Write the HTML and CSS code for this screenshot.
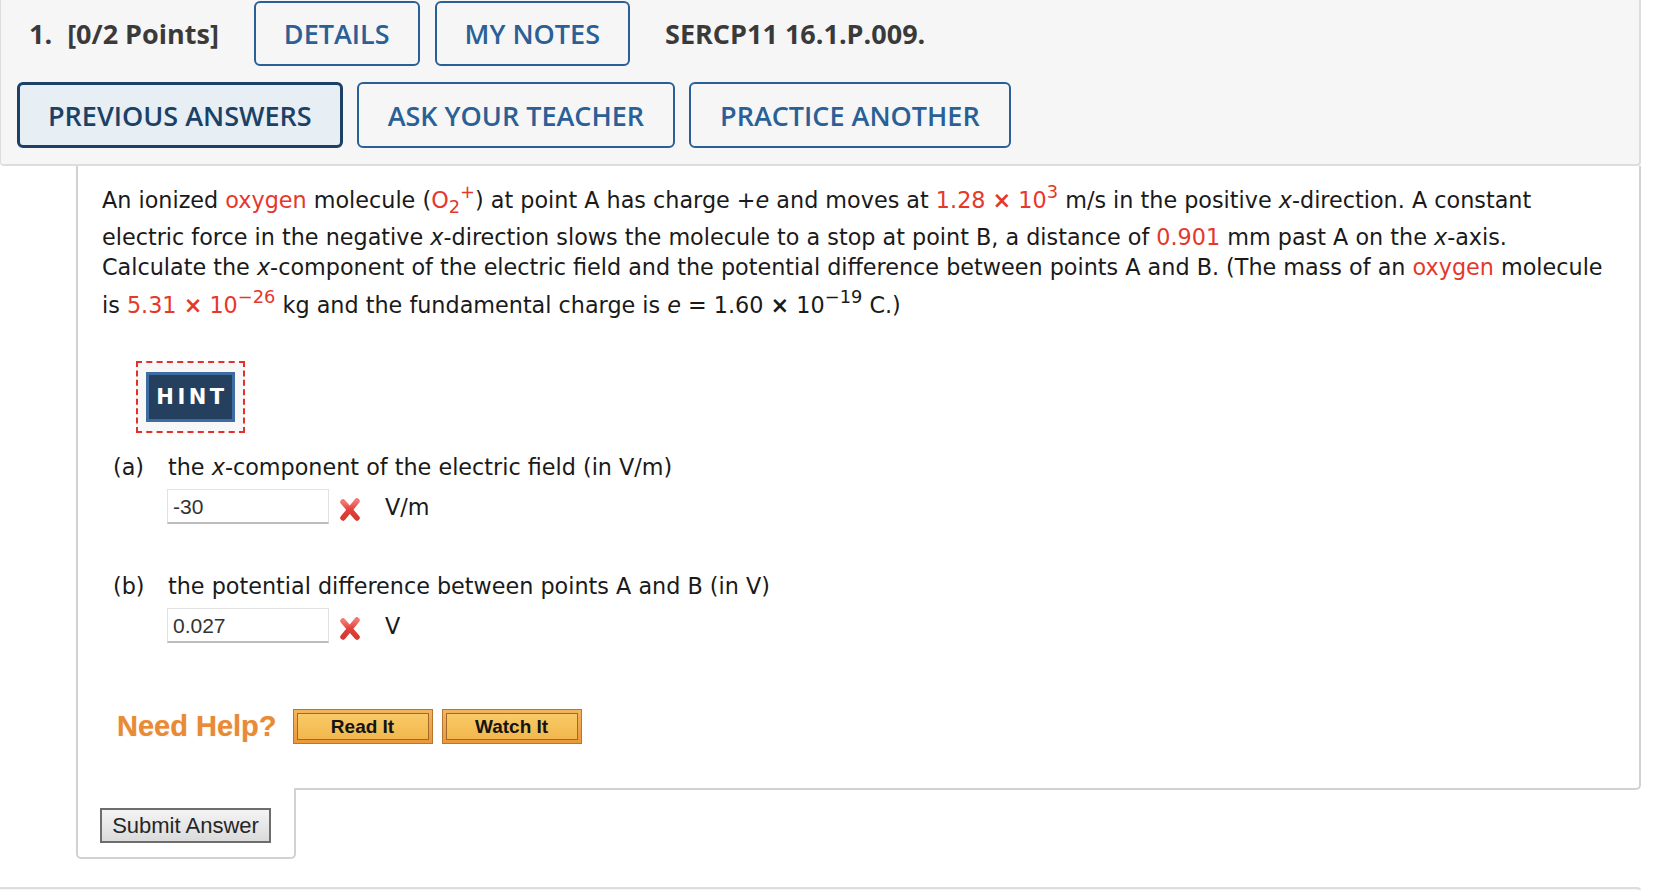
FILE: index.html
```html
<!DOCTYPE html>
<html lang="en">
<head>
<meta charset="utf-8">
<title>SERCP11 16.1.P.009.</title>
<link rel="stylesheet" href="styles.css">
</head>
<body>
<div class="page">
  <div class="qhead">
    <div class="row row1">
      <span class="qnum">1.</span>
      <span class="pts">[0/2 Points]</span>
      <button class="tbtn">DETAILS</button>
      <button class="tbtn">MY NOTES</button>
      <span class="qid">SERCP11 16.1.P.009.</span>
    </div>
    <div class="row row2">
      <button class="tbtn active">PREVIOUS ANSWERS</button>
      <button class="tbtn">ASK YOUR TEACHER</button>
      <button class="tbtn">PRACTICE ANOTHER</button>
    </div>
  </div>

  <div class="qbody">
    <p class="prompt">An ionized <span class="red">oxygen</span> molecule (<span class="red">O<sub>2</sub><sup>+</sup></span>) at point A has charge +<i>e</i> and moves at <span class="red">1.28 <b>×</b> 10<sup>3</sup></span> m/s in the positive <i>x</i>-direction. A constant<br>electric force in the negative <i>x</i>-direction slows the molecule to a stop at point B, a distance of <span class="red">0.901</span> mm past A on the <i>x</i>-axis.<br>Calculate the <i>x</i>-component of the electric field and the potential difference between points A and B. (The mass of an <span class="red">oxygen</span> molecule<br>is <span class="red">5.31 <b>×</b> 10<sup>−26</sup></span> kg and the fundamental charge is <i>e</i> = 1.60 <b>×</b> 10<sup>−19</sup> C.)</p>

    <div class="hint-wrap"><span class="hint">HINT</span></div>

    <div class="part part-a">
      <div class="part-label"><span class="letter">(a)</span><span>the <i>x</i>-component of the electric field (in V/m)</span></div>
      <div class="answer">
        <span class="field">-30</span>
        <svg class="wrong" viewBox="0 0 24 26" width="24" height="26" aria-hidden="true">
          <defs>
            <linearGradient id="xg" x1="0" y1="0" x2="0" y2="1">
              <stop offset="0" stop-color="#f07a72"/>
              <stop offset="0.5" stop-color="#e2413a"/>
              <stop offset="1" stop-color="#d63a33"/>
            </linearGradient>
          </defs>
          <path d="M5 5 L19 21" stroke="url(#xg)" stroke-width="5.5" stroke-linecap="round" fill="none"/>
          <path d="M19 4 L5 21" stroke="url(#xg)" stroke-width="5.5" stroke-linecap="round" fill="none"/>
        </svg>
        <span class="unit">V/m</span>
      </div>
    </div>

    <div class="part part-b">
      <div class="part-label"><span class="letter">(b)</span><span>the potential difference between points A and B (in V)</span></div>
      <div class="answer">
        <span class="field">0.027</span>
        <svg class="wrong" viewBox="0 0 24 26" width="24" height="26" aria-hidden="true">
          <path d="M5 5 L19 21" stroke="url(#xg)" stroke-width="5.5" stroke-linecap="round" fill="none"/>
          <path d="M19 4 L5 21" stroke="url(#xg)" stroke-width="5.5" stroke-linecap="round" fill="none"/>
        </svg>
        <span class="unit">V</span>
      </div>
    </div>

    <div class="help">
      <span class="need">Need Help?</span>
      <span class="obtn"><span class="obtn-in">Read It</span></span>
      <span class="obtn"><span class="obtn-in">Watch It</span></span>
    </div>
  </div>

  <div class="submit-tab">
    <button class="submit">Submit Answer</button>
  </div>

  <div class="next-q"></div>
</div>
</body>
</html>
```

FILE: styles.css
```css
html, body {
  margin: 0;
  padding: 0;
  background: #ffffff;
}

.page {
  width: 1641px;
}

/* ---------- question header ---------- */
.qhead {
  background: #f6f6f6;
  border: 2px solid #dddddd;
  border-top: none;
  border-left-width: 1px;
  border-radius: 0 0 4px 4px;
  padding: 1px 0 16px 16px;
  font-family: "Open Sans", "Liberation Sans", sans-serif;
}

.row {
  display: flex;
  align-items: center;
}

.row1 {
  height: 65px;
  padding-left: 12px;
}

.row2 {
  height: 66px;
  margin-top: 16px;
  gap: 14px;
}

.qnum,
.pts,
.qid {
  font-size: 27px;
  font-weight: 700;
  color: #3a3a3a;
}

.pts {
  margin-left: 15px;
  margin-right: 35px;
}

.qid {
  margin-left: 35px;
}

.tbtn {
  height: 100%;
  box-sizing: border-box;
  padding: 0 28px;
  border: 2px solid #2a6096;
  border-radius: 6px;
  background: transparent;
  color: #2a6096;
  font-family: "Open Sans", "Liberation Sans", sans-serif;
  font-size: 27px;
  font-weight: 600;
  line-height: 1;
}

.row2 .tbtn {
  padding: 0 29px;
}

.row1 .tbtn + .tbtn {
  margin-left: 15px;
}

.row2 .tbtn.active {
  border: 3px solid #1b4166;
  color: #1b4166;
  background: #e7eef4;
  padding: 0 28px;
}

/* ---------- question body ---------- */
.qbody {
  margin-left: 76px;
  border: 2px solid #d2d2d2;
  border-top: none;
  border-radius: 0 0 5px 0;
  padding: 11px 24px 44px 24px;
  font-family: "DejaVu Sans", Verdana, sans-serif;
  font-size: 22.3px;
  color: #1a1a1a;
}

.prompt {
  margin: 0;
  line-height: 30px;
  white-space: nowrap;
}

.red {
  color: #e5382c;
}

.prompt sub,
.prompt sup {
  font-size: 0.8em;
}

.prompt sup {
  vertical-align: 0.55em;
}

.prompt b {
  font-weight: bold;
}

/* hint */
.hint-wrap {
  display: inline-block;
  margin: 41px 0 0 34px;
  padding: 9px 8px;
  border: 2px dashed #e3302a;
  background: #f7f7f7;
}

.hint {
  display: block;
  width: 89px;
  height: 50px;
  box-sizing: border-box;
  border: 3px solid #3e6ba1;
  background: #253f5f;
  color: #ffffff;
  font-family: "DejaVu Sans", Verdana, sans-serif;
  font-weight: bold;
  font-size: 21px;
  letter-spacing: 3.5px;
  line-height: 44px;
  text-align: center;
  padding-left: 3px;
}

/* parts */
.part-label {
  display: flex;
  line-height: 30px;
  padding-left: 11px;
}

.letter {
  width: 55px;
  flex: none;
}

.part-a {
  margin-top: 19px;
}

.part-b {
  margin-top: 47px;
}

.answer {
  display: flex;
  align-items: center;
  margin-top: 7px;
  padding-left: 65px;
  height: 35px;
}

.field {
  width: 162px;
  height: 35px;
  box-sizing: border-box;
  border: 1px solid #e2e2e2;
  border-bottom: 2px solid #bdbdbd;
  background: #ffffff;
  font-family: "Liberation Sans", Arial, sans-serif;
  font-size: 21px;
  color: #333333;
  line-height: 33px;
  padding-left: 5px;
}

.wrong {
  margin-left: 9px;
  margin-top: 6px;
  flex: none;
}

.unit {
  margin-left: 23px;
  color: #1a1a1a;
}

/* need help */
.help {
  display: flex;
  align-items: center;
  margin-top: 66px;
  padding-left: 15px;
  height: 35px;
}

.need {
  font-family: "Liberation Sans", Arial, sans-serif;
  font-weight: bold;
  font-size: 29px;
  color: #e88a36;
  margin-right: 16px;
  text-shadow: 0 0 1px rgba(232, 138, 54, 0.5);
}

.obtn {
  display: inline-flex;
  width: 140px;
  height: 35px;
  box-sizing: border-box;
  padding: 3px;
  border: 1px solid #b9772e;
  background: linear-gradient(#f3b45e, #ea983a);
  margin-right: 9px;
}

.obtn-in {
  flex: 1;
  display: flex;
  align-items: center;
  justify-content: center;
  border: 1px solid #a06a2c;
  background: linear-gradient(#f8ca68, #f2b74c);
  font-family: "Liberation Sans", Arial, sans-serif;
  font-weight: bold;
  font-size: 19px;
  color: #141414;
}

/* submit tab */
.submit-tab {
  margin-left: 76px;
  margin-top: -2px;
  width: 220px;
  box-sizing: border-box;
  height: 71px;
  border: 2px solid #d2d2d2;
  border-top: none;
  border-radius: 0 0 5px 5px;
  background: #ffffff;
  padding: 20px 0 0 22px;
}

.submit {
  display: block;
  width: 171px;
  height: 35px;
  box-sizing: border-box;
  border: 2px solid #6d6d6d;
  background: linear-gradient(#f4f4f4, #dadada);
  font-family: "Liberation Sans", Arial, sans-serif;
  font-size: 22px;
  color: #262626;
  padding: 0;
}

.next-q {
  margin-top: 28px;
  height: 20px;
  border-top: 2px solid #dddddd;
  border-right: 2px solid #dddddd;
  border-radius: 0 4px 0 0;
  background: #f6f6f6;
}
```
